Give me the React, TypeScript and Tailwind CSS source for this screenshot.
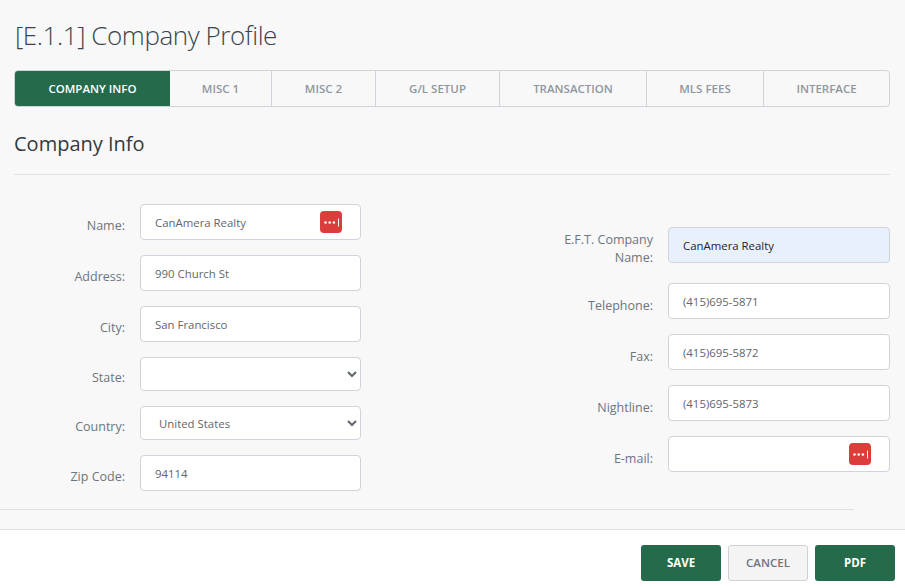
const font = "font-['Open_Sans','Noto_Sans',sans-serif]";

const tabs = [
  { label: "COMPANY INFO", w: "w-[155px]", active: true },
  { label: "MISC 1", w: "w-[102px]" },
  { label: "MISC 2", w: "w-[104px]" },
  { label: "G/L SETUP", w: "w-[124px]" },
  { label: "TRANSACTION", w: "w-[147px]" },
  { label: "MLS FEES", w: "w-[117px]" },
  { label: "INTERFACE", w: "flex-1" },
];

function KeyIcon() {
  return (
    <span className="absolute right-[19px] top-[7px] flex h-[22px] w-[22px] items-center justify-center rounded-[4px] bg-[#da3d3a]">
      <svg width="17" height="11" viewBox="0 0 17 11">
        <circle cx="2.5" cy="5.5" r="1.3" fill="#fff" />
        <circle cx="6.7" cy="5.5" r="1.3" fill="#fff" />
        <circle cx="10.9" cy="5.5" r="1.3" fill="#fff" />
        <rect x="15" y="1.5" width="1" height="8" fill="#fff" />
      </svg>
    </span>
  );
}

function Field({ label, value = "", icon = false, tall = false, filled = false, right = false }: { label: string; value?: string; icon?: boolean; tall?: boolean; filled?: boolean; right?: boolean }) {
  return (
    <div className={`flex ${tall ? "items-start" : "items-center"}`}>
      <label className={`w-[126px] pr-[15px] text-right text-[12.5px] text-[#6c757d] ${tall ? "mt-[4px] leading-[18px]" : right ? "pt-[8px] leading-[19px]" : "pt-[6px] leading-[19px]"}`}>{label}</label>
      <div className="relative flex-1">
        <input
          readOnly
          value={value}
          className={`block h-[36px] w-full rounded-[4px] border border-[#ced4da] px-[14px] text-[11.4px] outline-none ${filled ? "bg-[#e8f0fe] text-[#1f2328]" : "bg-white text-[#5f666d]"} ${font}`}
        />
        {icon && <KeyIcon />}
      </div>
    </div>
  );
}

function SelectField({ label, value }: { label: string; value: string }) {
  return (
    <div className="flex items-center">
      <label className="w-[126px] pr-[15px] pt-[6px] text-right text-[12.5px] leading-[19px] text-[#6c757d]">{label}</label>
      <select
        value={value}
        onChange={() => {}}
        className={`h-[34px] flex-1 rounded-[4px] border border-[#ced4da] bg-white px-[14px] text-[11.4px] text-[#5f666d] outline-none ${font}`}
      >
        <option value=""></option>
        <option value="United States">United States</option>
      </select>
    </div>
  );
}

export default function App() {
  return (
    <div className={`flex h-[588px] w-[905px] flex-col overflow-hidden bg-[#f8f8f8] ${font}`}>
      <div className="h-[529px]">
        <div className="px-[14px]">
          <h1 className="pt-[14px] pl-[1px] text-[26px] font-light leading-[42px] tracking-[-0.43px] text-[#3c444b]">[E.1.1] Company Profile</h1>
          <div className="mt-[14px] flex h-[37px] w-[876px] overflow-hidden rounded-[4px] border border-[#ced4da] text-[11.5px] font-semibold">
            {tabs.map((t, i) => (
              <div
                key={t.label}
                className={`flex items-center justify-center ${t.w} ${t.active ? "bg-[#256a4b] text-white" : "text-[#8f969d]"} ${i > 0 && i < tabs.length - 1 ? "border-r border-[#ced4da]" : ""}`}
              >
                {t.label}
              </div>
            ))}
          </div>
          <h2 className="mt-[23px] text-[20px] leading-[28px] text-[#343a40]">Company Info</h2>
          <div className="mt-[16px] h-px w-[876px] bg-[#dfe1e3]" />
          <div className="mt-[29px] flex">
            <div className="flex w-[347px] flex-col gap-[15px]">
              <Field label="Name:" value="CanAmera Realty" icon />
              <Field label="Address:" value="990 Church St" />
              <Field label="City:" value="San Francisco" />
              <SelectField label="State:" value="" />
              <SelectField label="Country:" value="United States" />
              <Field label="Zip Code:" value="94114" />
            </div>
            <div className="ml-[181px] flex w-[348px] flex-col gap-[15px] pt-[23px]">
              <div className="mb-px">
                <Field label="E.F.T. Company Name:" value="CanAmera Realty" tall filled />
              </div>
              <Field label="Telephone:" value="(415)695-5871" right />
              <Field label="Fax:" value="(415)695-5872" right />
              <Field label="Nightline:" value="(415)695-5873" right />
              <Field label="E-mail:" icon right />
            </div>
          </div>
        </div>
        <div className="mt-[18px] h-px w-[854px] bg-[#e0e1e6]" />
      </div>
      <div className="flex h-[59px] justify-end gap-[7px] border-t border-[#dfe0e2] bg-white pr-[10px] pt-[15px]">
        <button className="h-[36px] w-[80px] rounded-[3px] bg-[#256a4b] text-[11.5px] font-bold text-white">SAVE</button>
        <button className="h-[36px] w-[80px] rounded-[3px] border border-[#cfd1d3] bg-[#f4f4f5] text-[11.5px] font-semibold text-[#6c757d]">CANCEL</button>
        <button className="h-[36px] w-[80px] rounded-[3px] bg-[#256a4b] text-[11.5px] font-bold text-white">PDF</button>
      </div>
    </div>
  );
}
